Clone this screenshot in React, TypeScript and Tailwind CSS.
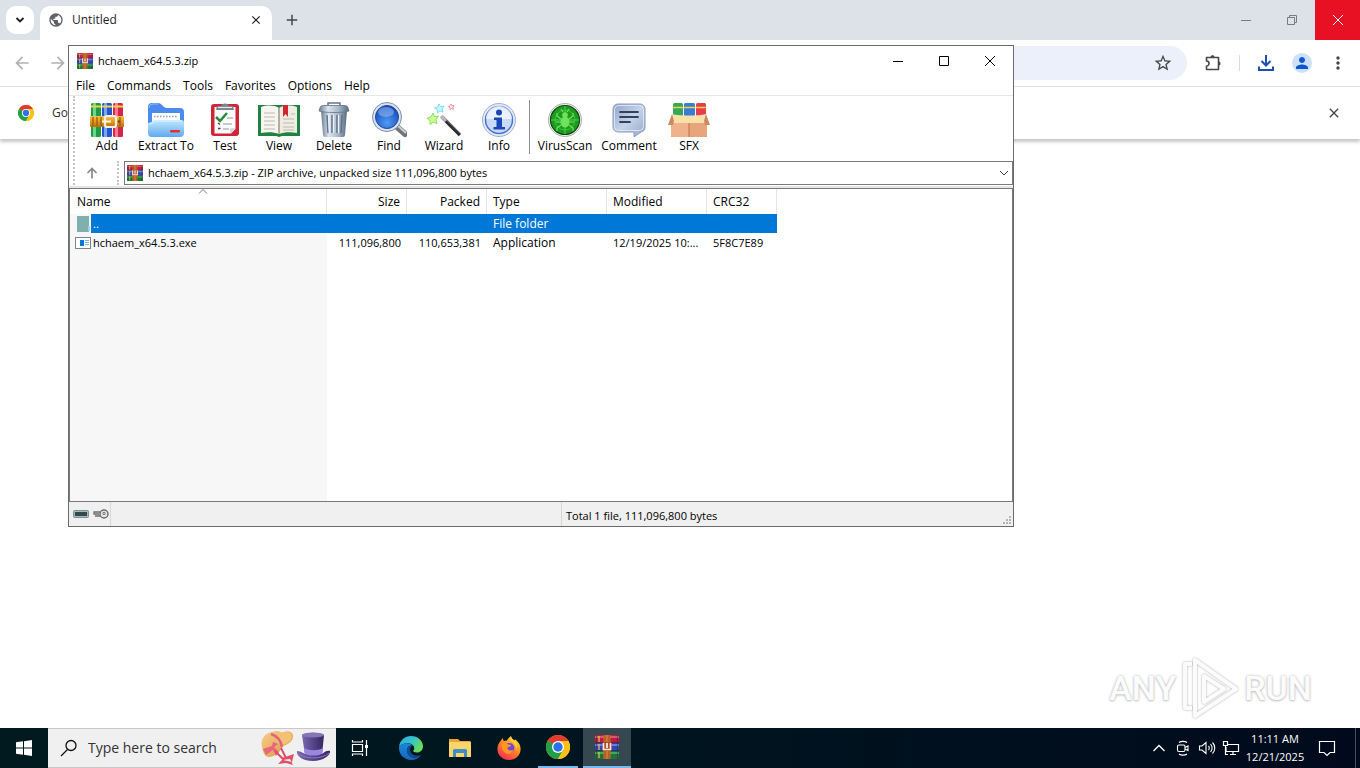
import React, { useState } from 'react';
import { MdAdd, MdArrowBack, MdArrowForward, MdClose, MdMoreVert, MdPerson, MdPublic, MdStarBorder } from 'react-icons/md';

interface IconProps {
  className?: string;
}

interface Entry {
  name: string;
  size: string;
  packed: string;
  type: string;
  modified: string;
  crc: string;
  folder?: boolean;
}

const entries: Entry[] = [
  { name: '..', size: '', packed: '', type: 'File folder', modified: '', crc: '', folder: true },
  {
    name: 'hchaem_x64.5.3.exe',
    size: '111,096,800',
    packed: '110,653,381',
    type: 'Application',
    modified: '12/19/2025 10:...',
    crc: '5F8C7E89',
  },
];

const menus = ['File', 'Commands', 'Tools', 'Favorites', 'Options', 'Help'];

/* ---------- logos ---------- */

const RarIcon: React.FC<IconProps> = ({ className }) => (
  <svg viewBox="0 0 24 24" className={className} aria-hidden="true">
    <rect x="0" y="0" width="24" height="8" rx="1" fill="#b81f3f" />
    <rect x="0" y="1" width="24" height="2" fill="#e0566f" />
    <rect x="0" y="8" width="24" height="8" rx="1" fill="#3347b0" />
    <rect x="0" y="9" width="24" height="2" fill="#6a7fe0" />
    <rect x="0" y="16" width="24" height="8" rx="1" fill="#1d7436" />
    <rect x="0" y="17" width="24" height="2" fill="#45a95c" />
    <path d="M0 7.700h24M0 15.700h24" stroke="#1d1233" strokeOpacity=".6" strokeWidth=".8" />
    <path d="M1.500 0v24M22.500 0v24" stroke="#2a1c3c" strokeOpacity=".45" />
    <path d="M4 1v6M4 9v6M4 17v6" stroke="#e5c44a" strokeWidth="1.200" />
    <rect x="8.500" y="0" width="7" height="24" fill="#cf7430" />
    <path d="M10 0v24M14 0v24" stroke="#8a3d16" strokeWidth=".7" />
    <rect x="7.500" y="7" width="9" height="9" rx="1" fill="#b04a2a" />
    <path d="M8.500 8v6.500h7V8" fill="none" stroke="#f5ecd8" strokeWidth="1.600" />
    <rect x="11.200" y="8" width="1.600" height="5" fill="#fff" />
  </svg>
);

const ChromeLogo: React.FC<IconProps> = ({ className }) => (
  <svg viewBox="0 0 24 24" className={className} aria-hidden="true">
    <circle cx="12" cy="12" r="12" fill="#fbc116" />
    <path d="M12 12 L1.600 6 A12 12 0 0 1 22.400 6 Z" fill="#e33b2e" />
    <path d="M1.600 6 A12 12 0 0 0 12 24 L17.200 15 L12 12 Z" fill="#23a047" />
    <path d="M12 24 A12 12 0 0 0 22.400 6 H12 L17.200 15 Z" fill="#fbc116" />
    <path d="M1.600 6 L6.800 15 L12 12 Z" fill="#23a047" />
    <circle cx="12" cy="12" r="6" fill="#fff" />
    <circle cx="12" cy="12" r="4.700" fill="#2b72e8" />
  </svg>
);

const EdgeLogo: React.FC<IconProps> = ({ className }) => (
  <svg viewBox="0 0 24 24" className={className} aria-hidden="true">
    <defs>
      <linearGradient id="edgeTop" x1="0" y1="0" x2="1" y2=".5">
        <stop offset="0" stopColor="#2aa7e6" />
        <stop offset=".55" stopColor="#35c4c8" />
        <stop offset="1" stopColor="#6bdc5b" />
      </linearGradient>
      <linearGradient id="edgeLow" x1="0" y1="0" x2="0" y2="1">
        <stop offset="0" stopColor="#1b86d8" />
        <stop offset="1" stopColor="#1468bd" />
      </linearGradient>
    </defs>
    <path d="M0 11C.6 4.600 5.800 0 12 0c7 0 12 5 12 10.200 0 4-3 6.300-6.200 6.300-2.500 0-3.600-.8-3.600-1.500 0-.6 1-1 1-2.900 0-2.600-2.600-4.800-6.300-4.800C4.600 7.300 1.200 8.900 0 11Z" fill="url(#edgeTop)" />
    <path d="M0 11c1.600-2.600 5-3.800 8.400-3.700 2 .1 4 .9 5.400 2.200-3-.6-5.800 1.300-5.800 4.700 0 5 5 8.300 9.500 7.300 1.500-.3 3.300-1.200 4.600-2.300C20 22.400 16.200 24 12 24 5 24-.5 18.500 0 11Z" fill="url(#edgeLow)" />
    <path d="M8 14.200c0 5 5 8.300 9.500 7.300 1.800-.4 3.600-1.400 4.700-2.600-3.600 1.500-9.700 1-11-4.200-.4-1.900.2-3.900 2.600-5.200C10.800 9 8 10.800 8 14.200Z" fill="#0f4c92" />
  </svg>
);

const FirefoxLogo: React.FC<IconProps> = ({ className }) => (
  <svg viewBox="0 0 24 24" className={className} aria-hidden="true">
    <defs>
      <linearGradient id="fox" x1=".8" y1="0" x2=".2" y2="1">
        <stop offset="0" stopColor="#ffe14a" />
        <stop offset=".45" stopColor="#ff8a1f" />
        <stop offset="1" stopColor="#f5245c" />
      </linearGradient>
    </defs>
    <path d="M4 4.500 5.500 2l1.300 3 3-.4C11 2.500 12.600 1 14 0c0 2 1.500 3.200 3.300 4.600L18 3.300c2.600 1.900 5.600 5 5.600 9.700C23.600 19.500 18.500 24 12 24S.4 19.300.4 13C.4 9.500 2 6.500 4 4.500Z" fill="url(#fox)" />
    <circle cx="12.300" cy="12" r="5" fill="#7542e5" />
    <path d="M5 7.500c2.500-.8 4.500-.6 6 .9 1.500.1 3 .3 3 1-.2 1.500-3.400 1.300-3.600 2.600.2 2.300 3.600 3.500 6.200 1.600-1 3.200-4 4.700-6.800 3.800C6 16.300 4.300 12 5 7.500Z" fill="#ff9a1f" />
    <path d="M14 0c0 2 1.500 3.200 3.300 4.600 3 2.600 3.700 6.400 1.700 10.400 1-4-1-7.500-4-9.500C13.500 4.500 13 2 14 0Z" fill="#ffd83c" />
  </svg>
);

const ExplorerLogo: React.FC<IconProps> = ({ className }) => (
  <svg viewBox="0 0 24 24" className={className} aria-hidden="true">
    <path d="M1 3h9l2 2h10.500v4H1Z" fill="#e8a33a" />
    <rect x="1" y="6" width="22" height="15" fill="#fbd56c" />
    <path d="M5 21v-6.500A1.500 1.500 0 0 1 6.500 13h11a1.500 1.500 0 0 1 1.500 1.500V21h-3v-4H8v4Z" fill="#3f8fc7" />
    <path d="M8 21v-4h8v4Z" fill="#fbd56c" />
  </svg>
);

const HatsArt: React.FC<IconProps> = ({ className }) => (
  <svg viewBox="0 0 72 38" className={className} aria-hidden="true">
    <defs>
      <linearGradient id="topHat" x1="0" y1="0" x2="1" y2="0">
        <stop offset="0" stopColor="#7a69ae" />
        <stop offset=".5" stopColor="#57458c" />
        <stop offset="1" stopColor="#35265f" />
      </linearGradient>
      <linearGradient id="straw" x1="0" y1="0" x2="1" y2="1">
        <stop offset="0" stopColor="#f8cf8c" />
        <stop offset="1" stopColor="#d9953f" />
      </linearGradient>
    </defs>
    <path d="M2 18C0 10 5 4 12 3c4-2 8-1 10 1 5-3 10-2 11 2 1 5-4 9-10 11-2 5-8 11-14 11-4 0-6-4-7-10Z" fill="url(#straw)" />
    <ellipse cx="24" cy="9" rx="8" ry="6" transform="rotate(-20 24 9)" fill="#f3c174" />
    <path d="M11 5c6 2 10 7 11 13" fill="none" stroke="#e0647a" strokeWidth="2.500" />
    <path d="M12 17 3 20l3 6 7-5 3 6 3-4-5-5 4-3-5-2Z" fill="#e8657f" />
    <path d="m15 22 9 9m-3-12 5 10" stroke="#d94e6b" strokeWidth="2" />
    <path d="m22 29 12-4-2 8-9-2Zm0 2-4 4 8-1 7 2-3-6Z" fill="#e04e69" />
    <path d="M42 6c6-3 16-3 22 0l-2 20H45Z" fill="url(#topHat)" />
    <ellipse cx="53" cy="6" rx="11" ry="2.500" fill="#8577b5" />
    <path d="M44 19c6 3 13 3 19 0l-1 6c-5 3-12 3-17 0Z" fill="#9b86e0" />
    <path d="M37 22c2 0 5 1 8 3 5 2 12 2 17 0 3-3 6-4 8-3 1 4-7 10-17 10s-17-5-16-10Z" fill="url(#topHat)" />
    <path d="M38 24c5 6 24 7 31 0" fill="none" stroke="#8c7bc2" />
  </svg>
);

/* ---------- archive toolbar art ---------- */

const AddIcon: React.FC = () => (
  <svg viewBox="0 0 36 36" className="size-9" aria-hidden="true">
    <defs>
      <linearGradient id="belt" x1="0" y1="0" x2="0" y2="1">
        <stop offset="0" stopColor="#f6c353" />
        <stop offset=".5" stopColor="#e39a20" />
        <stop offset="1" stopColor="#b9700e" />
      </linearGradient>
    </defs>
    <rect x="2" y="1" width="10" height="34" rx="1.500" fill="#1f9a45" />
    <rect x="4" y="1" width="3" height="34" fill="#6fd886" />
    <rect x="13" y="1" width="10" height="34" rx="1.500" fill="#2756cc" />
    <rect x="15" y="1" width="3" height="34" fill="#77a6f6" />
    <rect x="24" y="1" width="10" height="34" rx="1.500" fill="#d3264a" />
    <rect x="26" y="1" width="3" height="34" fill="#fb7c8f" />
    <path d="M2 4.500h10M13 4.500h10M24 4.500h10" stroke="#f3d24a" strokeWidth="2" />
    <rect x="1" y="14" width="34" height="11" rx="1" fill="url(#belt)" />
    <path d="M4 15v9M8 15v9M12 15v9M31 15v9" stroke="#9b5c0b" strokeWidth="1.300" />
    <rect x="16" y="14" width="11" height="11" rx="2" fill="none" stroke="#f4efe4" strokeWidth="2.200" />
    <path d="M13 19.500h9" stroke="#fff6d4" strokeWidth="2" />
    <circle cx="30" cy="19.500" r="1.300" fill="#824607" />
  </svg>
);

const ExtractIcon: React.FC = () => (
  <svg viewBox="0 0 36 36" className="size-9" aria-hidden="true">
    <defs>
      <linearGradient id="folderFront" x1="0" y1="0" x2="0" y2="1">
        <stop offset="0" stopColor="#c2e8fd" />
        <stop offset="1" stopColor="#5eaaf0" />
      </linearGradient>
    </defs>
    <path d="M0 5a4 4 0 0 1 4-4h6c4 0 5 5 9 5h13a4 4 0 0 1 4 4v20H0Z" fill="#4b8bee" />
    <path d="M1 6a4 4 0 0 1 4-4h5" fill="none" stroke="#8ebcff" />
    <rect x="4" y="11" width="28" height="12" fill="#fbfdff" />
    <path d="M6 14.500h24" stroke="#8a9fba" strokeWidth="1.500" strokeDasharray="1.500 1.500" />
    <path d="M0 21c4 0 4-3 8-3h25c3 0 3 2 3 4v9a4 4 0 0 1-4 4H4a4 4 0 0 1-4-4Z" fill="url(#folderFront)" />
    <path d="M1 22c4 0 4-3 8-3h24" fill="none" stroke="#e3f5ff" />
    <rect x="22" y="28" width="10" height="2.500" rx="1" fill="#e33030" />
  </svg>
);

const TestIcon: React.FC = () => (
  <svg viewBox="0 0 36 36" className="size-9" aria-hidden="true">
    <rect x="4" y="2" width="28" height="32" rx="3" fill="#cf2535" />
    <path d="M7.500 5h21v22l-4.500 4.500H7.500Z" fill="#fafafa" />
    <path d="M28.500 26 23 26.500 23.500 31.500Z" fill="#cfd4da" />
    <path d="M10 4h4c0-3.500 8-3.500 8 0h4l1 4H9Z" fill="#7a828d" />
    <path d="M11 5.500h14" stroke="#e3e7eb" strokeWidth="1.200" />
    <path d="m9 15 4 4 7-8" fill="none" stroke="#258a3c" strokeWidth="2.500" />
    <path d="M20 16h6M16 22h9M16 27h6" stroke="#9298a1" strokeWidth="1.100" />
    <path d="m11 21 2 1.500M11 26.500h2.500" stroke="#444" strokeWidth="1.400" />
  </svg>
);

const ViewIcon: React.FC = () => (
  <svg viewBox="0 0 44 36" className="h-9 w-11" aria-hidden="true">
    <path d="M1 3h42v31H25l-3 1-3-1H1Z" fill="#1f8243" />
    <path d="M4 5c6-2 13-2 18 1v26c-5-2-12-2-18-1Z" fill="#f7f5ee" />
    <path d="M40 5c-6-2-13-2-18 1v26c5-2 12-2 18-1Z" fill="#efece2" />
    <path d="M22 6v26" stroke="#b3ad9c" strokeWidth="2" />
    <path d="M7 11h11M7 15h11M7 19h11M7 23h11M7 27h11M26 17h11M26 21h11M26 25h11M26 28h11M34 12h4" stroke="#bcb9b1" />
    <path d="M26 3h5v12l-2.500-3-2.500 3Z" fill="#d22635" />
  </svg>
);

const DeleteIcon: React.FC = () => (
  <svg viewBox="0 0 36 36" className="size-9" aria-hidden="true">
    <defs>
      <linearGradient id="bin" x1="0" y1="0" x2="1" y2="0">
        <stop offset="0" stopColor="#6b7d93" />
        <stop offset=".3" stopColor="#dbe4ee" />
        <stop offset=".65" stopColor="#a9b9ca" />
        <stop offset="1" stopColor="#586a80" />
      </linearGradient>
    </defs>
    <path d="M12 3V1h12v2" fill="none" stroke="#66758a" strokeWidth="1.500" />
    <path d="M5 9h26l-2 24a2 2 0 0 1-2 2H9a2 2 0 0 1-2-2Z" fill="url(#bin)" />
    <path d="m11 13 1 18M16 13v18M21 13v18M26 13l-1 18" stroke="#5f738b" strokeWidth="1.500" />
    <path d="m12.500 13 1 18M17.500 13v18M22.500 13v18" stroke="#edf3f9" strokeWidth="1.200" />
    <path d="M4 6c0-2 2-2.500 4-2.500h20c2 0 4 .5 4 2.500l1 3c-6 2-24 2-30 0Z" fill="url(#bin)" stroke="#5f7289" strokeWidth=".8" />
  </svg>
);

const FindIcon: React.FC = () => (
  <svg viewBox="0 0 36 36" className="size-9" aria-hidden="true">
    <defs>
      <radialGradient id="lens" cx=".5" cy=".75" r=".7">
        <stop offset="0" stopColor="#4f9cf5" />
        <stop offset="1" stopColor="#1747b8" />
      </radialGradient>
    </defs>
    <path d="m25 24 9 8" stroke="#70757c" strokeWidth="6" strokeLinecap="round" />
    <path d="m26 23 9 8" stroke="#cdd1d6" strokeWidth="2" />
    <circle cx="16" cy="15" r="14.500" fill="#d9e3f1" stroke="#7b8ca8" />
    <circle cx="16" cy="15" r="11.500" fill="url(#lens)" stroke="#23489a" />
    <ellipse cx="15" cy="10" rx="8" ry="5" fill="#9fc6fa" opacity=".5" />
  </svg>
);

const WizardIcon: React.FC = () => (
  <svg viewBox="0 0 36 36" className="size-9" aria-hidden="true">
    <path d="m16 15 18 18" stroke="#2b2b2f" strokeWidth="3.500" />
    <path d="m15 14 5 5" stroke="#b9b9bf" strokeWidth="3.500" />
    <path d="m20 17.500 15 14.500" stroke="#8d8d94" />
    <path d="m13 2 1.500 2.500 3.500-.3-2 2.800 1 3-3-1-2.500 2-.2-3.300L8.500 6l3.200-1Z" fill="#c8f4ff" stroke="#7fdcf3" />
    <path d="m7 11 1.500 3.500 4-.3-2.500 3.300 1 4-3.800-1.400L4 22.500l0-4-3-2.300 4-1.200Z" fill="#c9ff96" stroke="#8be25c" />
    <path d="m25 2 1 1.500h2l-1 1.800.7 2-2.200-.8-1.500 1.200V5.500L22 4.500l2-.6Z" fill="#ffe3e6" stroke="#f29aa5" />
  </svg>
);

const InfoIcon: React.FC = () => (
  <svg viewBox="0 0 36 36" className="size-9" aria-hidden="true">
    <circle cx="18" cy="18" r="16.500" fill="#e4ecf9" stroke="#9fb0cf" />
    <circle cx="18" cy="18" r="13.500" fill="#c9d9f6" stroke="#4a72cf" strokeWidth="1.500" />
    <path d="M5 17a13 13 0 0 1 26 0Z" fill="#f2f6fe" opacity=".8" />
    <circle cx="18" cy="10.500" r="3" fill="#1946b8" />
    <path d="M13 15.500h8V25h3v2.500H12.500V25h3v-7H13Z" fill="#1946b8" />
  </svg>
);

const VirusIcon: React.FC = () => (
  <svg viewBox="0 0 36 36" className="size-9" aria-hidden="true">
    <circle cx="18" cy="18" r="16.500" fill="#ececec" stroke="#9a9f9a" strokeWidth=".8" />
    <circle cx="18" cy="18" r="14.500" fill="#1c9b1f" stroke="#0b4a10" strokeWidth="1.200" />
    <circle cx="18" cy="18" r="10" fill="none" stroke="#4bd14b" strokeWidth=".7" />
    <path d="M18 4v28M4 18h28" stroke="#63d85f" strokeWidth=".8" />
    <ellipse cx="18" cy="20" rx="4.500" ry="5.500" fill="#6fe35c" />
    <circle cx="18" cy="13" r="2.800" fill="#6fe35c" />
    <path d="m14 17-4-3V11m4 9H9m5 3-4 3v3m12-12 4-3v-3m-4 9h5m-5 3 4 3v3M16 10l-2-3m6 3 2-3" fill="none" stroke="#6fe35c" strokeWidth="1.200" />
  </svg>
);

const CommentIcon: React.FC = () => (
  <svg viewBox="0 0 36 36" className="size-9" aria-hidden="true">
    <defs>
      <linearGradient id="bubble" x1="0" y1="0" x2="1" y2="1">
        <stop offset="0" stopColor="#8ea3c8" />
        <stop offset=".5" stopColor="#c6d3e8" />
        <stop offset="1" stopColor="#91a7c9" />
      </linearGradient>
    </defs>
    <path d="M7 2h22a5 5 0 0 1 5 5v18a5 5 0 0 1-4 5l-7 5v-5H7a5 5 0 0 1-5-5V7a5 5 0 0 1 5-5Z" fill="url(#bubble)" stroke="#8c9dbb" />
    <rect x="3.500" y="3.500" width="29" height="25" rx="4" fill="none" stroke="#dbe5f4" />
    <path d="M9 10h18M9 15h18M9 20h10" stroke="#35415b" strokeWidth="1.800" strokeLinecap="round" />
  </svg>
);

const SfxIcon: React.FC = () => (
  <svg viewBox="0 0 44 36" className="h-9 w-11" aria-hidden="true">
    <rect x="6" y="1" width="10" height="13" rx="1.500" fill="#33a85a" />
    <rect x="17" y="1" width="11" height="13" rx="1.500" fill="#3b7bd3" />
    <rect x="29" y="1" width="10" height="13" rx="1.500" fill="#e63d4d" />
    <path d="M6 5.500h10M17 5.500h11M29 5.500h10" stroke="#f3d24a" strokeWidth="1.500" />
    <path d="M5 12c8 2 26 2 34 0v10H5Z" fill="#f8e0a6" />
    <path d="M4 21h36v14H4Z" fill="#efb28a" />
    <path d="M22 21h18v14H22Z" fill="#e8a57c" />
    <path d="m5 12-4 11h5l1-4M39 12l4 11h-5l-1-4" fill="#c98a60" />
    <path d="M22 21v14" stroke="#b9744a" />
  </svg>
);

interface Command {
  label: string;
  icon: React.ReactNode;
  width: string;
}

const commands: Command[] = [
  { label: 'Add', icon: <AddIcon />, width: 'w-[54px]' },
  { label: 'Extract To', icon: <ExtractIcon />, width: 'w-16' },
  { label: 'Test', icon: <TestIcon />, width: 'w-[54px]' },
  { label: 'View', icon: <ViewIcon />, width: 'w-[54px]' },
  { label: 'Delete', icon: <DeleteIcon />, width: 'w-14' },
  { label: 'Find', icon: <FindIcon />, width: 'w-[54px]' },
  { label: 'Wizard', icon: <WizardIcon />, width: 'w-14' },
  { label: 'Info', icon: <InfoIcon />, width: 'w-[54px]' },
];

const extraCommands: Command[] = [
  { label: 'VirusScan', icon: <VirusIcon />, width: 'w-16' },
  { label: 'Comment', icon: <CommentIcon />, width: 'w-16' },
  { label: 'SFX', icon: <SfxIcon />, width: 'w-14' },
];

const CommandButton: React.FC<Command> = ({ label, icon, width }) => (
  <button className={`${width} flex flex-col items-center whitespace-nowrap pt-1.5 leading-4`}>
    {icon}
    <span>{label}</span>
  </button>
);

/* ---------- browser ---------- */

const TabStrip: React.FC = () => (
  <div className="flex h-10 bg-[#dde2e9]">
    <button aria-label="Search tabs" className="ml-1.5 mt-1.5 flex size-7 items-center justify-center rounded-[10px] bg-white">
      <svg viewBox="0 0 10 10" className="size-2.5" fill="none" stroke="#1f1f1f" strokeWidth="1.800">
        <path d="m1.500 3 3.500 3.500L8.500 3" />
      </svg>
    </button>
    <div className="ml-1.5 mt-1.5 flex w-[232px] items-center rounded-t-[10px] bg-white px-2 pb-1.5">
      <MdPublic className="size-4 text-[#5f6368]" />
      <span className="ml-2 flex-1 text-xs text-[#1f1f1f]">Untitled</span>
      <button aria-label="Close tab" className="flex size-4 items-center justify-center">
        <MdClose className="size-3.5 text-[#1f1f1f]" />
      </button>
    </div>
    <button aria-label="New tab" className="flex w-10 items-center justify-center">
      <MdAdd className="size-[18px] text-[#474747]" />
    </button>
    <div className="ml-auto flex">
      <button aria-label="Minimize browser" className="flex w-[46px] items-center justify-center">
        <svg viewBox="0 0 12 12" className="size-3" stroke="#777b82"><path d="M1 6.500h10" /></svg>
      </button>
      <button aria-label="Restore browser" className="flex w-[46px] items-center justify-center">
        <svg viewBox="0 0 12 12" className="size-3" fill="none" stroke="#777b82">
          <path d="M1.500 3.500h7v7h-7ZM3.500 3.500v-2h7v7h-2" />
        </svg>
      </button>
      <button aria-label="Close browser" className="flex w-[45px] items-center justify-center bg-[#e81123]">
        <svg viewBox="0 0 12 12" className="size-3" stroke="#fff"><path d="m1 1 10 10M11 1 1 11" /></svg>
      </button>
    </div>
  </div>
);

const BrowserToolbar: React.FC = () => (
  <div className="flex h-[47px] items-center border-b border-[#dfe1e5] bg-white px-3">
    <button aria-label="Back" className="mr-4 text-[#b0b2b5]"><MdArrowBack className="size-5" /></button>
    <button aria-label="Forward" className="text-[#b0b2b5]"><MdArrowForward className="size-5" /></button>
    <div className="ml-20 flex h-[34px] flex-1 items-center rounded-full bg-[#ecf0fa] pr-3.5">
      <input aria-label="Address" className="h-full min-w-0 flex-1 bg-transparent px-4 outline-none" />
      <button aria-label="Bookmark this tab"><MdStarBorder className="size-5 text-[#474747]" /></button>
    </div>
    <button aria-label="Extensions" className="ml-4">
      <svg viewBox="0 0 20 20" className="size-5" fill="none" stroke="#474747" strokeWidth="1.600">
        <path d="M3.500 4.500h12v12h-12v-3.500a2.500 2.500 0 0 0 0-5Z" strokeLinejoin="round" />
        <path d="M7.500 4c0-2.200 4-2.200 4 0ZM16 8.500c2 0 2 4 0 4Z" fill="#474747" stroke="none" />
      </svg>
    </button>
    <span className="mx-4 h-4 w-px bg-[#cfdcf5]" />
    <button aria-label="Downloads">
      <svg viewBox="0 0 20 20" className="size-5" fill="none" stroke="#1c4fb0" strokeWidth="2">
        <path d="M10 2v10M5.500 8l4.500 4.500L14.500 8M3 13.500V17h14v-3.500" />
      </svg>
    </button>
    <button aria-label="Profile" className="ml-4 flex size-5 items-center justify-center rounded-full bg-[#cfe0fc]">
      <MdPerson className="size-[18px] text-[#0b57d0]" />
    </button>
    <button aria-label="Menu" className="ml-4"><MdMoreVert className="size-5 text-[#474747]" /></button>
  </div>
);

const InfoBar: React.FC = () => (
  <div className="flex h-[52px] items-center bg-white px-[18px] shadow-[0_3px_3px_0_rgba(0,0,0,0.22)]">
    <ChromeLogo className="size-4" />
    <span className="ml-[18px] flex-1 text-xs text-[#333]">Google Chrome isn&apos;t your default browser</span>
    <button aria-label="Dismiss"><MdClose className="size-4 text-[#474747]" /></button>
  </div>
);

/* ---------- archive window ---------- */

const headCell = 'border-r border-[#e5e5e5] px-1.5 font-normal';
const cell = 'overflow-hidden whitespace-nowrap px-1.5';

const FileList: React.FC = () => {
  const [selected, setSelected] = useState('..');

  return (
    <div className="h-[314px] border border-[#7a7a7a] bg-white">
      <table className="h-full w-[707px] table-fixed border-separate border-spacing-0 leading-4">
        <thead>
          <tr className="h-[25px] text-left">
            <th className="relative w-[257px] border-r border-[#e5e5e5] px-[7px] font-normal">
              Name
              <svg viewBox="0 0 10 5" className="absolute left-1/2 top-0 h-[5px] w-2.5" fill="none" stroke="#777">
                <path d="m1 4.500 4-4 4 4" />
              </svg>
            </th>
            <th className={`${headCell} w-20 text-right`}>Size</th>
            <th className={`${headCell} w-20 text-right`}>Packed</th>
            <th className={`${headCell} w-[120px]`}>Type</th>
            <th className={`${headCell} w-[100px]`}>Modified</th>
            <th className={`${headCell} w-[70px]`}>CRC32</th>
          </tr>
        </thead>
        <tbody>
          {entries.map((entry) => {
            const active = entry.name === selected;
            return (
              <tr
                key={entry.name}
                onClick={() => setSelected(entry.name)}
                className={active ? 'h-[19px] bg-[#0078d7] text-white' : 'h-[19px]'}
              >
                <td className="bg-[#f7f7f7] p-0">
                  <div className="flex h-[19px] items-center">
                    <span className="flex w-[21px] shrink-0 justify-center bg-[#f7f7f7] pl-1">
                      {entry.folder ? (
                        <svg viewBox="0 0 14 16" className="h-4 w-3.5">
                          <rect x="1" width="12" height="16" fill="#7fb0ad" />
                          <rect x="12" y="10" width="2" height="5" fill="#a9cfe3" />
                        </svg>
                      ) : (
                        <svg viewBox="0 0 16 12" className="h-3 w-4">
                          <rect x=".5" y=".5" width="15" height="11" fill="#fff" stroke="#7b858c" />
                          <rect x="5" y="3" width="4" height="6" fill="#0078d7" />
                          <path d="M10 3.500h4M10 5.500h4M10 7.500h4" stroke="#7fb2dc" />
                        </svg>
                      )}
                    </span>
                    <span className={`flex h-full flex-1 items-center pl-0.5 text-[11px] ${active ? 'bg-[#0078d7]' : ''}`}>{entry.name}</span>
                  </div>
                </td>
                <td className={`${cell} text-right text-[11px]`}>{entry.size}</td>
                <td className={`${cell} text-right text-[11px]`}>{entry.packed}</td>
                <td className={cell}>{entry.type}</td>
                <td className={`${cell} text-[11px]`}>{entry.modified}</td>
                <td className={`${cell} text-[11px]`}>{entry.crc}</td>
              </tr>
            );
          })}
          <tr>
            <td className="bg-[#f7f7f7]" />
            <td colSpan={5} />
          </tr>
        </tbody>
      </table>
    </div>
  );
};

const ArchiveWindow: React.FC = () => (
  <section className="absolute left-[68px] right-[346px] top-[45px] border border-[#6b6b6b] bg-white text-xs text-black">
    <header className="flex h-[30px] items-center pl-2">
      <RarIcon className="size-4" />
      <h1 className="ml-[5px] flex-1 text-[11px]">hchaem_x64.5.3.zip</h1>
      <button aria-label="Minimize" className="flex h-full w-[46px] items-center justify-center">
        <svg viewBox="0 0 12 12" className="size-3" stroke="#000"><path d="M1 6.500h10" /></svg>
      </button>
      <button aria-label="Maximize" className="flex h-full w-[46px] items-center justify-center">
        <svg viewBox="0 0 12 12" className="size-3" fill="none" stroke="#000"><path d="M1.500 1.500h9v9h-9Z" /></svg>
      </button>
      <button aria-label="Close" className="flex h-full w-[46px] items-center justify-center">
        <svg viewBox="0 0 12 12" className="size-3" stroke="#000"><path d="m1 1 10 10M11 1 1 11" /></svg>
      </button>
    </header>
    <nav className="flex h-5 items-center gap-3 border-b border-[#e8e8e8] pl-[7px]">
      {menus.map((menu) => (
        <button key={menu}>{menu}</button>
      ))}
    </nav>
    <div className="ml-1 border-l-2 border-dotted border-[#c4c4c4]">
      <div className="flex h-[65px] pl-[5px]">
        {commands.map((command) => (
          <CommandButton key={command.label} {...command} />
        ))}
        <span className="ml-[3px] mt-1 h-[54px] w-px bg-[#8c8c8c]" />
        <span className="w-[3px]" />
        {extraCommands.map((command) => (
          <CommandButton key={command.label} {...command} />
        ))}
      </div>
      <div className="flex h-6">
        <button aria-label="Up one level" className="flex w-11 items-center justify-center border-r-2 border-dotted border-[#c4c4c4] pr-2">
          <svg viewBox="0 0 12 12" className="size-3" fill="none" stroke="#8a8a8a" strokeWidth="1.700">
            <path d="M6 11.500V1.500M1.500 6 6 1.500 10.500 6" />
          </svg>
        </button>
        <div className="ml-[5px] flex flex-1 items-center border border-[#7a7a7a] pl-0.5">
          <RarIcon className="size-4" />
          <div className="relative ml-[5px] flex flex-1 items-center">
            <select aria-label="Archive path" className="w-full appearance-none bg-transparent text-[11px] outline-none">
              <option>hchaem_x64.5.3.zip - ZIP archive, unpacked size 111,096,800 bytes</option>
            </select>
            <svg viewBox="0 0 10 6" className="pointer-events-none absolute right-[3px] h-1.5 w-2.5" fill="none" stroke="#444">
              <path d="m1 1 4 4 4-4" />
            </svg>
          </div>
        </div>
      </div>
    </div>
    <div className="mt-px border-t-2 border-[#e6e6e6]">
      <FileList />
    </div>
    <footer className="flex h-6 items-stretch bg-[#f0f0f0]">
      <div className="flex w-[42px] items-center gap-1 border-r border-[#d7d7d7] pl-1">
        <svg viewBox="0 0 16 8" className="h-2 w-4">
          <rect x=".5" y=".5" width="15" height="7" rx="1" fill="#a9b8bd" stroke="#7f8e93" />
          <rect x="2" y="2" width="12" height="4" fill="#35494d" />
        </svg>
        <svg viewBox="0 0 16 10" className="h-2.5 w-4" fill="none" stroke="#6d6d6d">
          <circle cx="11" cy="5" r="4" fill="#e8e8e8" strokeWidth="1.500" />
          <circle cx="11" cy="4.500" r="1.200" />
          <path d="M7 3H1v2h5M7 7H2" strokeWidth="1.300" />
        </svg>
      </div>
      <div className="w-[451px] border-r border-[#d7d7d7]" />
      <p className="flex flex-1 items-center pl-1 pt-1 text-[11px]">Total 1 file, 111,096,800 bytes</p>
      <svg viewBox="0 0 12 12" className="size-3 self-end" fill="#b4b4b4">
        <path d="M8 2h2v2H8ZM8 5h2v2H8ZM8 8h2v2H8ZM5 5h2v2H5ZM5 8h2v2H5ZM2 8h2v2H2Z" />
      </svg>
    </footer>
  </section>
);

/* ---------- desktop ---------- */

const Watermark: React.FC = () => (
  <div className="absolute bottom-12 right-12 flex items-center gap-1 font-['Roboto','Liberation_Sans',sans-serif] text-[34px] font-medium leading-[60px] text-[#fbfbfb] [text-shadow:0_0_3px_#bbb,0_1px_2px_#ccc]">
    <span>ANY</span>
    <svg viewBox="0 0 60 64" className="h-16 w-[60px] drop-shadow-[0_0_1px_#aaa]" fill="none" stroke="#fbfbfb" strokeWidth="4" strokeLinejoin="round">
      <path d="M12 8H5v44h7M15 4v56l41-27L15 4Z" />
      <path d="M24 20v26l20-13-20-13Z" />
    </svg>
    <span>RUN</span>
  </div>
);

const Taskbar: React.FC = () => (
  <footer className="flex h-10 items-stretch bg-linear-to-r from-[#001a20] via-[#00141f] to-[#000a1c] text-white">
    <button aria-label="Start" className="flex w-12 items-center justify-center">
      <svg viewBox="0 0 16 16" className="size-4" fill="#fff">
        <path d="M0 2.300 7 1.300v6.200H0ZM8 1.200 16 0v7.500H8ZM0 8.500h7v6.200l-7-1ZM8 8.500h8V16l-8-1.200Z" />
      </svg>
    </button>
    <label className="flex w-72 items-center border-y border-[#c8c8c8] bg-[#f0f0f0] pl-3 pr-1">
      <svg viewBox="0 0 18 18" className="size-[18px] shrink-0" fill="none" stroke="#111" strokeWidth="1.300">
        <circle cx="11" cy="6.500" r="5" />
        <path d="M7.500 10.500 1 17" />
      </svg>
      <input
        type="text"
        aria-label="Type here to search"
        placeholder="Type here to search"
        className="ml-2.5 min-w-0 flex-1 bg-transparent text-sm text-[#222] outline-none placeholder:text-[#333]"
      />
      <HatsArt className="h-[38px] w-[72px] shrink-0" />
    </label>
    <div className="flex gap-px">
      <button aria-label="Task View" className="mr-0.5 flex w-12 items-center justify-center">
        <svg viewBox="0 0 18 18" className="size-[18px]" fill="none" stroke="#fff" strokeWidth="1.200">
          <path d="M1.500 5.500h10v7h-10ZM1.500 1v2h10V1M1.500 17v-2h10v2M15.500 1v16" />
          <path d="M14 6h3v3h-3Z" fill="#fff" stroke="none" />
        </svg>
      </button>
      <button aria-label="Edge" className="flex w-12 items-center justify-center"><EdgeLogo className="size-6" /></button>
      <button aria-label="File Explorer" className="flex w-12 items-center justify-center"><ExplorerLogo className="size-6" /></button>
      <button aria-label="Firefox" className="flex w-12 items-center justify-center"><FirefoxLogo className="size-6" /></button>
      <button aria-label="Chrome" className="flex w-12 flex-col items-center">
        <ChromeLogo className="my-auto size-6" />
        <span className="h-0.5 w-10 bg-[#76b9ed]" />
      </button>
      <button aria-label="WinRAR" className="flex w-12 flex-col items-center bg-[#37474f]">
        <RarIcon className="my-auto size-6" />
        <span className="h-0.5 w-full bg-[#76b9ed]" />
      </button>
    </div>
    <div className="ml-auto flex">
      <button aria-label="Show hidden icons" className="flex w-6 items-center justify-center">
        <svg viewBox="0 0 14 14" className="size-3.5" fill="none" stroke="#fff" strokeWidth="1.300"><path d="m1.500 10 5.500-5.500L12.500 10" /></svg>
      </button>
      <button aria-label="Meet Now" className="flex w-6 items-center justify-center">
        <svg viewBox="0 0 16 16" className="size-4" fill="none" stroke="#fff" strokeWidth="1.100">
          <rect x="2.500" y="5" width="7.500" height="6.500" rx="1.500" />
          <path d="m10 7.500 3-1.500v4.500L10 9M4 2.500c2-1.500 6-1.500 8 0M4 14c2 1.500 6 1.500 8 0" />
        </svg>
      </button>
      <button aria-label="Volume" className="flex w-6 items-center justify-center">
        <svg viewBox="0 0 18 16" className="h-4 w-[18px]" fill="none" stroke="#fff" strokeWidth="1.100">
          <path d="M1.500 6h2.500l4-3.500v11L4 10H1.500ZM10.500 6c1 1 1 3 0 4M12.500 4c2 2.500 2 5.500 0 8M14.500 2.500c3 3 3 8 0 11" />
        </svg>
      </button>
      <button aria-label="Network" className="flex w-6 items-center justify-center">
        <svg viewBox="0 0 18 16" className="h-4 w-[18px]" fill="none" stroke="#fff" strokeWidth="1.200">
          <path d="M6 4.500h10.500v7H4V7M8 14.500h6M11 11.500v3M1.500 1.500h4v4h-4ZM3.500 5.500v9H6" />
        </svg>
      </button>
      <button className="flex w-16 flex-col items-center justify-center text-[11px] leading-[18px]">
        <span>11:11 AM</span>
        <span>12/21/2025</span>
      </button>
      <button aria-label="Notifications" className="flex w-10 items-center justify-center">
        <svg viewBox="0 0 18 18" className="size-[18px]" fill="none" stroke="#fff" strokeWidth="1.200">
          <path d="M1.500 2.500h15v11H12l-3 3-3-3H1.500Z" />
        </svg>
      </button>
      <button aria-label="Show desktop" className="ml-2 w-[5px] border-l border-[#46505f]" />
    </div>
  </footer>
);

const App: React.FC = () => (
  <div className="relative flex min-h-screen flex-col overflow-hidden bg-white font-['Open_Sans','Noto_Sans',sans-serif]">
    <TabStrip />
    <BrowserToolbar />
    <InfoBar />
    <main className="flex-1" />
    <ArchiveWindow />
    <Watermark />
    <Taskbar />
  </div>
);

export default App;
